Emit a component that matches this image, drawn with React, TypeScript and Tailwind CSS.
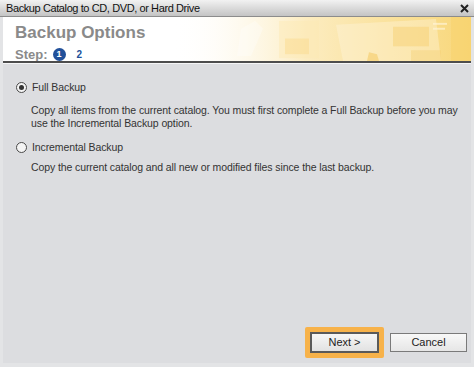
import React from 'react';

const Radio = ({ checked }: { checked?: boolean }) => (
  <span className="flex h-[11px] w-[11px] shrink-0 items-center justify-center rounded-full border border-[#4a4a4a] bg-[#f4f4f4]">
    {checked && <span className="h-[5px] w-[5px] rounded-full bg-[#333]" />}
  </span>
);

const HeaderArt = () => (
  <svg className="absolute right-0 top-0 h-full w-[300px]" viewBox="0 0 300 45" preserveAspectRatio="none">
    <defs>
      <linearGradient id="hg" x1="0" x2="1" y1="0" y2="0">
        <stop offset="0" stopColor="#ffffff" stopOpacity="0" />
        <stop offset="0.45" stopColor="#fcecc0" />
        <stop offset="1" stopColor="#f8d77a" />
      </linearGradient>
    </defs>
    <rect x="0" y="0" width="300" height="45" fill="url(#hg)" />
    <path d="M70 12 L84 4 L92 12 L80 40 L66 40 Z" fill="#ffffff" opacity="0.3" />
    <rect x="108" y="4" width="40" height="38" fill="#fde9b4" opacity="0.45" />
    <rect x="114" y="22" width="24" height="16" fill="#fad98a" opacity="0.45" />
    <path d="M165 8 L265 2 L270 45 L172 45 Z" fill="#fff6dc" opacity="0.4" />
    <rect x="222" y="10" width="36" height="20" fill="#f6cf6c" opacity="0.45" />
    <rect x="262" y="6" width="14" height="2" fill="#fff4d6" opacity="0.7" />
    <rect x="262" y="11" width="12" height="2" fill="#fff4d6" opacity="0.7" />
    <path d="M196 45 L198 36 L206 38 L208 45 Z" fill="#f3c658" opacity="0.5" />
    <rect x="240" y="34" width="30" height="11" fill="#f6d074" opacity="0.4" />
    <rect x="280" y="0" width="20" height="45" fill="#f8d16a" opacity="0.5" />
  </svg>
);

export default function App() {
  return (
    <div
      className="flex h-[367px] w-[474px] flex-col overflow-hidden bg-[#dcdde0] text-[#333]"
      style={{ fontFamily: '"Liberation Sans", Arial, sans-serif' }}
    >
      {/* title bar */}
      <div className="flex h-[17px] items-center justify-between border-b border-[#8c8c8c] bg-gradient-to-b from-[#f2f2f2] to-[#c4c4c4] pl-[6px] pr-[5px]">
        <span className="text-[11px] leading-none tracking-[-0.4px] text-[#111]">Backup Catalog to CD, DVD, or Hard Drive</span>
        <svg width="9" height="9" viewBox="0 0 9 9">
          <path d="M1 1 L8 8 M8 1 L1 8" stroke="#222" strokeWidth="2" />
        </svg>
      </div>

      <div className="flex flex-1 flex-col border-l-[3px] border-r-[3px] border-b-[4px] border-[#e3e4e6]">
        {/* header */}
        <div className="relative h-[46px] overflow-hidden border-b-2 border-[#4d4d4d] bg-white">
          <HeaderArt />
          <div className="relative pl-[12px] pt-[6px]">
            <div className="text-[17px] font-bold leading-[20px] text-[#8a8a8a]">Backup Options</div>
            <div className="mt-[5px] flex items-center">
              <span className="text-[13px] font-bold leading-none text-[#8a8a8a]">Step:</span>
              <span className="ml-[5px] flex h-[13px] w-[13px] items-center justify-center rounded-full bg-[#21509a] text-[9px] font-bold leading-none text-white">1</span>
              <span className="ml-[11px] text-[10px] font-bold leading-none text-[#21509a]">2</span>
            </div>
          </div>
        </div>
        <div className="h-px bg-white/70" />

        {/* body */}
        <div className="flex flex-1 flex-col pl-[13px] pr-[10px] pt-[16px] text-[10.5px] tracking-[-0.1px]">
          <div className="flex items-center gap-[5px]">
            <Radio checked />
            <span className="leading-[14px]">Full Backup</span>
          </div>
          <p className="mt-[10px] pl-[15px] leading-[13px]">
            Copy all items from the current catalog. You must first complete a Full Backup before you may use the Incremental Backup option.
          </p>
          <div className="mt-[10px] flex items-center gap-[5px]">
            <Radio />
            <span className="leading-[14px]">Incremental Backup</span>
          </div>
          <p className="mt-[7px] pl-[15px] leading-[13px]">
            Copy the current catalog and all new or modified files since the last backup.
          </p>

          <div className="-mr-[6px] mt-auto mb-[5px] flex items-center justify-end gap-[6px] tracking-normal">
            <div className="rounded-[2px] bg-[#f7b24a] p-[5px]">
              <button className="flex h-[21px] w-[69px] items-center justify-center border-2 border-[#5a5a5a] bg-gradient-to-b from-[#f6f6f6] to-[#e2e2e2] text-[11px] text-[#222]">
                Next &gt;
              </button>
            </div>
            <button className="flex h-[19px] w-[77px] items-center justify-center border border-[#7a7a7a] bg-gradient-to-b from-[#f8f8f8] to-[#e6e6e6] text-[11px] text-[#222]">
              Cancel
            </button>
          </div>
        </div>
      </div>
    </div>
  );
}
